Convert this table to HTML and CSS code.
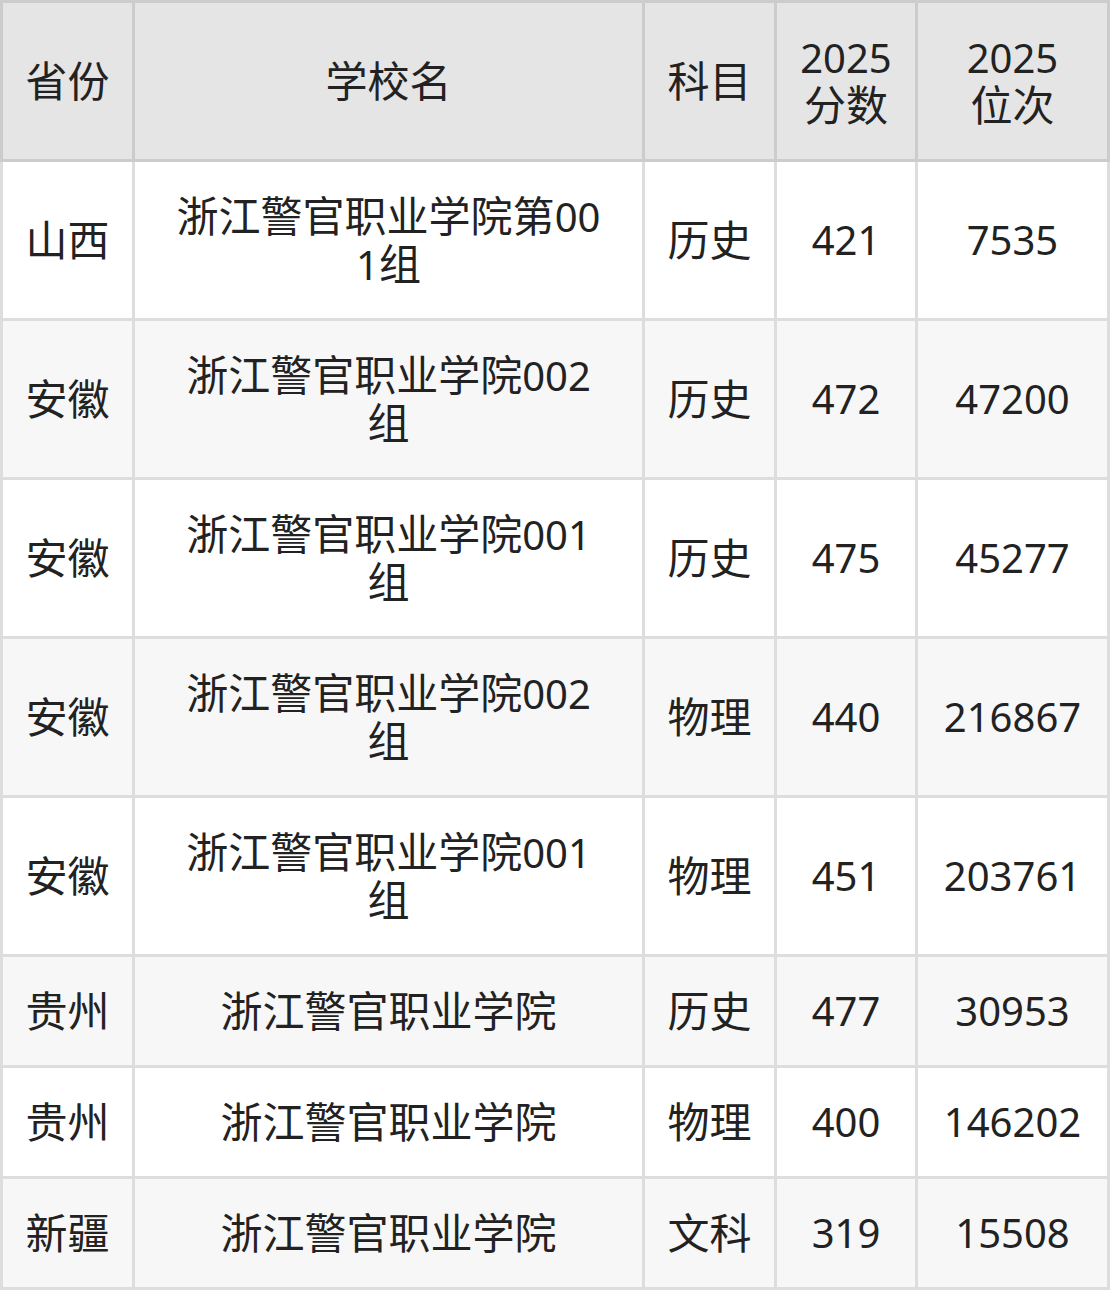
FILE: index.html
```html
<!DOCTYPE html>
<html lang="zh">
<head>
<meta charset="utf-8">
<link rel="stylesheet" href="styles.css">
</head>
<body>
<table class="score-table">
  <colgroup>
    <col class="c-prov">
    <col class="c-school">
    <col class="c-subj">
    <col class="c-score">
    <col class="c-rank">
  </colgroup>
  <thead>
    <tr>
      <th>省份</th>
      <th class="school">学校名</th>
      <th>科目</th>
      <th><span class="num">2025</span><br>分数</th>
      <th><span class="num">2025</span><br>位次</th>
    </tr>
  </thead>
  <tbody>
    <tr><td>山西</td><td class="school">浙江警官职业学院第<span class="num">001</span>组</td><td>历史</td><td class="num">421</td><td class="num">7535</td></tr>
    <tr><td>安徽</td><td class="school">浙江警官职业学院<span class="num">002</span>组</td><td>历史</td><td class="num">472</td><td class="num">47200</td></tr>
    <tr><td>安徽</td><td class="school">浙江警官职业学院<span class="num">001</span>组</td><td>历史</td><td class="num">475</td><td class="num">45277</td></tr>
    <tr><td>安徽</td><td class="school">浙江警官职业学院<span class="num">002</span>组</td><td>物理</td><td class="num">440</td><td class="num">216867</td></tr>
    <tr><td>安徽</td><td class="school">浙江警官职业学院<span class="num">001</span>组</td><td>物理</td><td class="num">451</td><td class="num">203761</td></tr>
    <tr><td>贵州</td><td class="school">浙江警官职业学院</td><td>历史</td><td class="num">477</td><td class="num">30953</td></tr>
    <tr><td>贵州</td><td class="school">浙江警官职业学院</td><td>物理</td><td class="num">400</td><td class="num">146202</td></tr>
    <tr><td>新疆</td><td class="school">浙江警官职业学院</td><td>文科</td><td class="num">319</td><td class="num">15508</td></tr>
  </tbody>
</table>
</body>
</html>
```
FILE: styles.css
```css
html, body {
  margin: 0;
  padding: 0;
  background: #ffffff;
}

.score-table {
  width: 1110px;
  border-collapse: collapse;
  table-layout: fixed;
  font-family: "Noto Sans", "Noto Sans CJK SC", sans-serif;
  font-size: 42px;
  line-height: 48px;
  color: #222222;
}

.c-prov { width: 132px; }
.c-school { width: 510px; }
.c-subj { width: 132px; }
.c-score { width: 141px; }
.c-rank { width: 192px; }

.score-table th,
.score-table td {
  padding: 30px 10px;
  height: 48px;
  text-align: center;
  vertical-align: middle;
  word-break: break-all;
}

.score-table th {
  font-weight: normal;
  background: #e5e5e5;
  border: 3px solid #cccccc;
}

.score-table td {
  border: 3px solid #dddddd;
  background: #ffffff;
}

.score-table tbody tr:nth-child(even) td {
  background: #f7f7f7;
}

.score-table .school {
  padding-left: 35px;
  padding-right: 35px;
}

.score-table .num {
  font-size: 40px;
}

.score-table span.num {
  line-height: 1;
}
```
